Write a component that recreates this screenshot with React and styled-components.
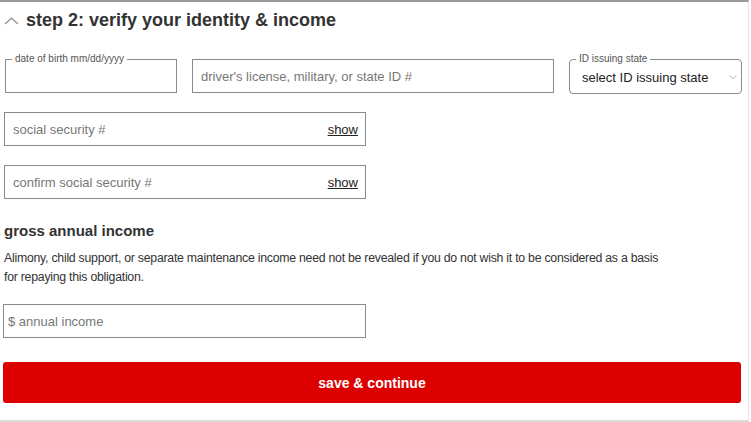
import React from "react";
import styled, { createGlobalStyle } from "styled-components";

const GlobalStyle = createGlobalStyle`
  html, body {
    margin: 0;
    padding: 0;
    background: #fff;
  }
  body {
    font-family: "Liberation Sans", Arial, Helvetica, sans-serif;
    color: #333;
  }
  * {
    box-sizing: border-box;
  }
`;

const Section = styled.section`
  width: 749px;
  height: 422px;
  border-top: 2px solid #9a9a9a;
  border-right: 1px solid #e4e4e4;
  border-bottom: 2px solid #dcdcdc;
  padding: 0 7px 0 4px;
`;

const Header = styled.div`
  display: flex;
  align-items: center;
  gap: 7px;
  height: 37px;
`;

const Title = styled.h2`
  margin: 0;
  font-size: 18px;
  font-weight: bold;
  color: #333;
`;

const Row = styled.div`
  display: grid;
  grid-template-columns: 172px 362px 173px;
  gap: 15px;
  margin-top: 20px;
  padding-left: 1px;
`;

const Field = styled.div`
  position: relative;
  width: ${(p) => p.width || "auto"};
  height: ${(p) => p.height || "34px"};
  border: 1px solid #8a8a8a;
  border-radius: ${(p) => (p.rounded ? "4px" : "0")};
  display: flex;
  align-items: center;
  padding: 0 ${(p) => p.padRight || "8px"} 0 ${(p) => p.padLeft || "8px"};
  margin-top: ${(p) => p.top || "0"};
  margin-left: ${(p) => p.shift || "0"};
  background: #fff;
`;

const Legend = styled.span`
  position: absolute;
  top: -7px;
  left: 6px;
  padding: 0 3px;
  background: #fff;
  font-size: 10px;
  color: #555;
  line-height: 11px;
`;

const Placeholder = styled.span`
  flex: 1;
  font-size: 13px;
  color: #777;
`;

const SelectText = styled.span`
  flex: 1;
  font-size: 13px;
  color: #222;
  padding: 2px 0 0 4px;
`;

const ShowLink = styled.a`
  font-size: 13px;
  color: #222;
  text-decoration: underline;
  margin-right: -1px;
`;

const SubTitle = styled.h3`
  margin: 23px 0 0;
  font-size: 15px;
  font-weight: bold;
  color: #333;
`;

const Note = styled.p`
  margin: 10px 0 0;
  max-width: 670px;
  font-size: 12.3px;
  letter-spacing: -0.25px;
  line-height: 19px;
  color: #333;
`;

const Button = styled.button`
  display: block;
  width: 738px;
  height: 41px;
  margin: 24px 0 0 -1px;
  border: none;
  border-radius: 3px;
  background: #dd0000;
  color: #fff;
  font-family: inherit;
  font-size: 14px;
  font-weight: bold;
`;

const ChevronUp = () => (
  <svg width="15" height="10" viewBox="0 0 15 10" fill="none">
    <path d="M1 8 L7.5 2 L14 8" stroke="#8a8a8a" strokeWidth="1.1" />
  </svg>
);

const ChevronDown = () => (
  <svg width="8" height="6" viewBox="0 0 8 6" fill="none">
    <path d="M0.5 1.5 L4 4.5 L7.5 1.5" stroke="#b0b0b0" strokeWidth="0.9" />
  </svg>
);

export default function App() {
  return (
    <>
      <GlobalStyle />
      <Section>
        <Header>
          <ChevronUp />
          <Title>step 2: verify your identity &amp; income</Title>
        </Header>

        <Row>
          <Field>
            <Legend>date of birth mm/dd/yyyy</Legend>
          </Field>
          <Field>
            <Placeholder>driver's license, military, or state ID #</Placeholder>
          </Field>
          <Field rounded height="35px" padRight="4px">
            <Legend>ID issuing state</Legend>
            <SelectText>select ID issuing state</SelectText>
            <ChevronDown />
          </Field>
        </Row>

        <Field width="362px" top="18px">
          <Placeholder>social security #</Placeholder>
          <ShowLink>show</ShowLink>
        </Field>
        <Field width="362px" top="19px">
          <Placeholder>confirm social security #</Placeholder>
          <ShowLink>show</ShowLink>
        </Field>

        <SubTitle>gross annual income</SubTitle>
        <Note>
          Alimony, child support, or separate maintenance income need not be
          revealed if you do not wish it to be considered as a basis for
          repaying this obligation.
        </Note>

        <Field width="363px" top="17px" shift="-1px" padLeft="4px">
          <Placeholder>$ annual income</Placeholder>
        </Field>

        <Button>save &amp; continue</Button>
      </Section>
    </>
  );
}
